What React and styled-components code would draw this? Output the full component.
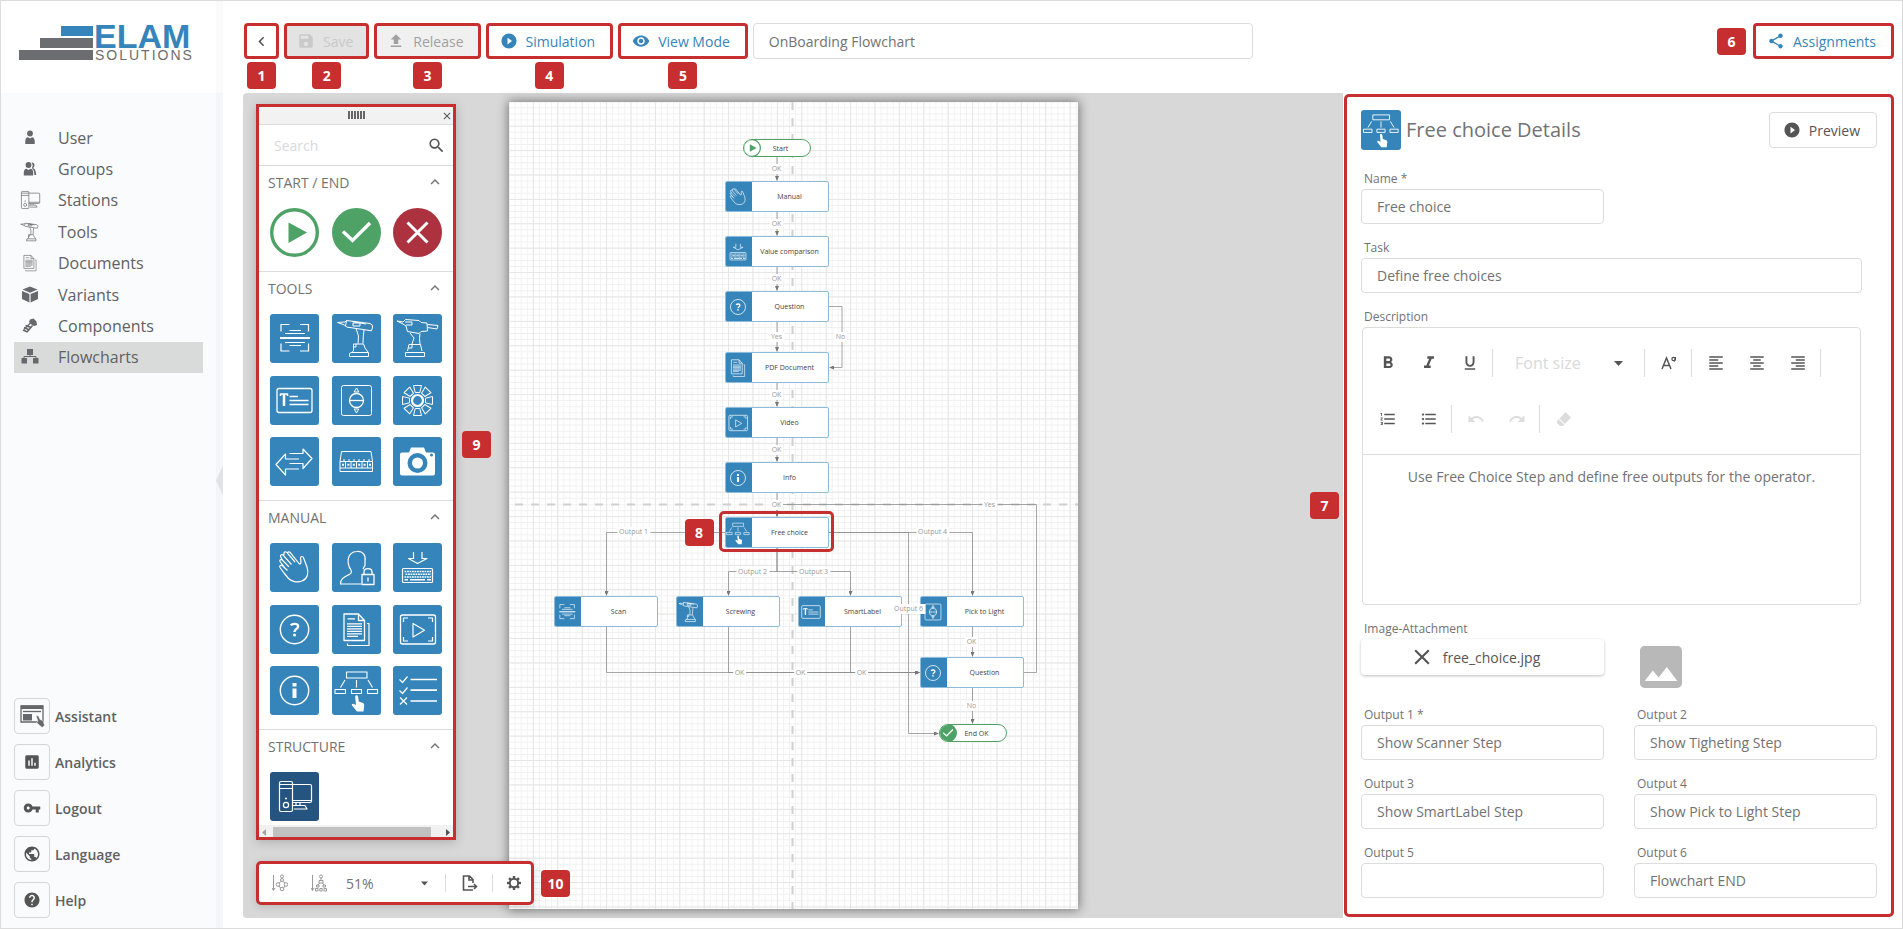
import React from "react";
import styled, { createGlobalStyle, css } from "styled-components";
import {
  MdSave, MdFileUpload, MdPlayCircleFilled, MdRemoveRedEye, MdShare, MdSearch,
  MdKeyboardArrowUp, MdChevronLeft, MdAssessment, MdVpnKey, MdPublic, MdHelp,
  MdFormatBold, MdFormatItalic, MdFormatUnderlined, MdFormatAlignLeft,
  MdFormatAlignCenter, MdFormatAlignRight, MdFormatListNumbered,
  MdFormatListBulleted, MdUndo, MdRedo, MdClose, MdImage,
} from "react-icons/md";

const color = {
  red: "#c62e30",
  blue: "#3685ba",
  navy: "#265481",
  green: "#4ea266",
  text: "#606163",
  soft: "#727272",
  line: "#dcdcdc",
};

const Global = createGlobalStyle`
  *, *::before, *::after { box-sizing: border-box; }
  body { margin: 0; background: #fff; }
  body, button, input, select, textarea { font-family: "Open Sans", "Noto Sans", sans-serif; }
  button, input, select, textarea { margin: 0; }
`;

/* ---------- page frame ---------- */

const Page = styled.div`
  display: flex;
  min-height: 100vh;
  border: 1px solid ${color.line};
  color: ${color.text};
  font-size: 14px;
`;

const Sidebar = styled.aside`
  display: flex;
  flex: 0 0 215px;
  flex-direction: column;
  background: #fafbfd;
`;

const LogoArea = styled.div`
  height: 92px;
  padding: 9px 0 0 18px;
  background: #fff;
`;

const Nav = styled.nav`
  display: grid;
  grid-auto-rows: 1fr;
  height: 251px;
  margin: 29px 13px 0;
`;

const NavLink = styled.a`
  display: flex;
  align-items: center;
  gap: 14px;
  padding-left: 2px;
  color: ${color.text};
  font-size: 16px;
  text-decoration: none;
  background: ${(p) => (p.$active ? "#d9dbdb" : "transparent")};

  svg { flex: none; color: #66686c; }
`;

const NavIcon = styled.span`
  display: flex;
  flex: 0 0 28px;
  align-items: center;
  justify-content: center;
`;

const UtilityList = styled.div`
  display: flex;
  flex-direction: column;
  gap: 10px;
  margin-top: auto;
  padding: 0 13px 10px;
`;

const UtilityButton = styled.button`
  display: flex;
  align-items: center;
  gap: 5px;
  padding: 0;
  border: 0;
  background: none;
  color: ${color.text};
  font-size: 14px;
  font-weight: 600;
`;

const UtilityIcon = styled.span`
  display: flex;
  align-items: center;
  justify-content: center;
  width: 36px;
  height: 36px;
  border: 1px solid #d4d6d9;
  border-radius: 4px;
  color: #555;
`;

const Rail = styled.div`
  display: flex;
  flex: 0 0 7px;
  align-items: center;
  background: linear-gradient(#fafafa 92px, #f4f5f8 92px);
`;

const RailHandle = styled.button`
  width: 7px;
  height: 30px;
  margin-top: 32px;
  padding: 0;
  border: 0;
  background: #e1e2e4;
  clip-path: polygon(100% 0, 100% 100%, 0 50%);
`;

const Main = styled.main`
  display: flex;
  flex: 1;
  flex-direction: column;
  min-width: 0;
  padding: 22px 8px 10px 20px;
`;

const TopBar = styled.header`
  display: flex;
  gap: 5px;
  min-height: 66px;
  margin: 0 0 4px 1px;
`;

const Callout = styled.div`
  display: flex;
  flex-direction: ${(p) => (p.$row ? "row" : "column")};
  align-items: center;
  align-self: flex-start;
  gap: ${(p) => (p.$row ? 7 : 3)}px;
  height: ${(p) => (p.$row ? "36px" : "auto")};
  margin-left: ${(p) => (p.$row ? "auto" : 0)};
`;

const Badge = styled.span`
  display: flex;
  align-items: center;
  justify-content: center;
  width: 29px;
  height: 27px;
  border-radius: 4px;
  background: ${color.red};
  color: #fff;
  font-size: 14px;
  font-weight: 700;
`;

const ActionButton = styled.button`
  display: flex;
  align-items: center;
  justify-content: center;
  gap: 8px;
  height: 36px;
  padding: ${(p) => (p.$compact ? "0 5px" : p.$plain ? "0 16px 0 13px" : "0 15px 0 11px")};
  border: ${(p) => (p.$plain ? `1px solid ${color.line}` : `3px solid ${color.red}`)};
  border-radius: 4px;
  background: #fff;
  color: ${(p) => (p.$plain || p.$compact ? "#555" : color.blue)};
  font-size: 14px;
  white-space: nowrap;

  ${(p) => p.$tone === "off" && css`padding: 0 13px 0 10px; background: #e3e3e3; color: #c9c9c9;`}
  ${(p) => p.$tone === "dim" && css`padding: 0 14px 0 10px; background: #f0f0f0; color: #a1a1a1;`}
`;

const TextInput = styled.input`
  width: 100%;
  height: 35px;
  padding: 0 15px;
  border: 1px solid ${color.line};
  border-radius: 4px;
  background: #fff;
  color: ${color.soft};
  font-size: 14px;
  outline: none;
`;

const TitleInput = styled(TextInput)`
  flex: 0 1 500px;
  height: 36px;
  min-width: 0;
`;

const Workspace = styled.div`
  display: flex;
  flex: 1;
  min-height: 0;
`;

/* ---------- canvas ---------- */

const Canvas = styled.section`
  position: relative;
  display: flex;
  flex: 1;
  justify-content: center;
  align-items: flex-start;
  min-width: 0;
  padding: 9px 0;
  border-radius: 4px 0 0 4px;
  background: #d8d8d8;
`;

const Paper = styled.div`
  position: relative;
  flex: none;
  width: 569px;
  height: 807px;
  background: #fff;
  box-shadow: 0 0 10px 1px rgba(0, 0, 0, 0.45);
`;

const Drawing = styled.svg`
  position: absolute;
  inset: 0;
  width: 100%;
  height: 100%;
`;

const StepNode = styled.div`
  position: absolute;
  left: ${(p) => p.$x - 509}px;
  top: ${(p) => p.$y - 102}px;
  display: flex;
  width: 104px;
  height: 31px;
  border: 1px solid #8dbbdb;
  border-radius: 2px;
  background: #fff;
  color: #444;
  font-size: 7px;
  overflow: hidden;
`;

const StepIcon = styled.span`
  display: flex;
  flex: 0 0 27px;
  align-items: center;
  justify-content: center;
  margin: -1px 0 -1px -1px;
  background: ${color.blue};
  color: #fff;
`;

const StepLabel = styled.span`
  flex: 1;
  align-self: center;
  text-align: center;
  white-space: nowrap;
`;

const Terminal = styled(StepNode)`
  width: 68px;
  height: 18px;
  padding-right: 9px;
  border: 1px solid ${color.green};
  border-radius: 9px;
`;

const TerminalIcon = styled.svg`
  flex: none;
  width: 18px;
  height: 18px;
  margin: -1px 0 0 -1px;
`;

const EdgeLabel = styled.span`
  position: absolute;
  left: ${(p) => p.$x - 509}px;
  top: ${(p) => p.$y - 102}px;
  padding: 0 2px;
  background: #fff;
  color: #999;
  font-size: 7px;
  line-height: 10px;
  white-space: nowrap;
  transform: translate(-50%, -50%);
`;

const Ring = styled.div`
  position: absolute;
  left: 210px;
  top: 409px;
  width: 115px;
  height: 41px;
  border: 3px solid ${color.red};
  border-radius: 5px;
`;

const PinnedBadge = styled(Badge)`
  position: absolute;
  left: ${(p) => p.$x}px;
  right: ${(p) => p.$right}px;
  top: ${(p) => p.$y}px;
`;

/* ---------- palette ---------- */

const Palette = styled.div`
  position: absolute;
  left: 13px;
  top: 11px;
  width: 200px;
  border: 3px solid ${color.red};
  background: #fff;
  box-shadow: 0 2px 10px rgba(0, 0, 0, 0.2);
`;

const PaletteBar = styled.div`
  display: flex;
  align-items: center;
  justify-content: flex-end;
  height: 18px;
  padding-left: 12px;
  border-bottom: 1px solid ${color.line};
  background: #f2f2f2;
  color: #555;
`;

const Grip = styled.span`
  width: 17px;
  height: 8px;
  margin: 0 auto 2px;
  background: repeating-linear-gradient(90deg, #666 0 2px, transparent 2px 3px);
`;

const IconButton = styled.button`
  display: flex;
  align-items: center;
  justify-content: center;
  width: ${(p) => p.$w || 24}px;
  height: ${(p) => p.$h || 24}px;
  padding: 0;
  border: 0;
  background: none;
  color: ${(p) => (p.disabled ? "#dcdcdc" : "#555")};
  font-size: 15px;
`;

const SearchRow = styled.label`
  display: flex;
  align-items: center;
  height: 41px;
  padding: 0 7px 0 15px;
  border-bottom: 1px solid ${color.line};
  color: #555;
`;

const SearchInput = styled.input`
  flex: 1;
  min-width: 0;
  padding: 0;
  border: 0;
  font-size: 14px;
  outline: none;
  &::placeholder { color: #d9d9d9; }
`;

const Group = styled.section`
  padding: 0 11px 14px;
  border-bottom: 1px solid ${color.line};
  &:last-of-type { padding-bottom: 4px; border-bottom: 0; }
`;

const GroupHeader = styled.button`
  display: flex;
  align-items: center;
  justify-content: space-between;
  width: calc(100% + 2px);
  height: 42px;
  padding: 0 0 10px;
  border: 0;
  background: none;
  color: ${color.soft};
  font-size: 14px;
  text-indent: -2px;
`;

const TileGrid = styled.div`
  display: grid;
  grid-template-columns: repeat(3, 49px);
  grid-auto-rows: 49px;
  justify-content: space-between;
  align-content: space-between;
  height: ${(p) => (p.$rows === 3 ? 172 : 49)}px;
`;

const Tile = styled.button`
  display: flex;
  padding: 0;
  border: 0;
  border-radius: ${(p) => (p.$round ? "50%" : "3px")};
  background: ${(p) => p.$bg || color.blue};
  color: #fff;
`;

const ScrollTrack = styled.div`
  display: flex;
  align-items: flex-end;
  justify-content: space-between;
  height: 12px;
  padding: 0 3px;
  background: #f1f1f1;
`;

const ScrollThumb = styled.span`
  width: 158px;
  height: 10px;
  margin: 0 auto 0 7px;
  background: #c1c1c1;
`;

const ScrollArrow = styled.svg`
  width: 4px;
  height: 8px;
`;

/* ---------- zoom bar ---------- */

const ZoomBar = styled.div`
  position: absolute;
  left: 13px;
  top: 768px;
  display: flex;
  align-items: center;
  width: 278px;
  height: 44px;
  padding: 0 0 0 7px;
  border: 3px solid ${color.red};
  border-radius: 5px;
  background: #fff;
  box-shadow: 0 2px 8px rgba(0, 0, 0, 0.15);
`;

const SelectWrap = styled.span`
  display: flex;
  align-items: center;
  width: ${(p) => p.$w}px;
  padding: 0 ${(p) => p.$end}px 0 ${(p) => p.$start}px;
  color: #555;
`;

const PlainSelect = styled.select`
  flex: 1;
  min-width: 0;
  padding: 0;
  border: 0;
  background: none;
  color: ${(p) => (p.$faint ? "#d9d9d9" : color.soft)};
  font-size: ${(p) => (p.$faint ? 16 : 14)}px;
  appearance: none;
  outline: none;
`;

const Divider = styled.span`
  flex: none;
  width: 1px;
  height: ${(p) => p.$h}px;
  margin: 0 3px 0 2px;
  background: ${color.line};
`;

/* ---------- details ---------- */

const Details = styled.section`
  flex: 0 0 550px;
  margin: 1px 0 1px 1px;
  padding: 13px 14px 0;
  border: 3px solid ${color.red};
  border-radius: 5px;
  background: #fff;
`;

const DetailsHeader = styled.div`
  display: flex;
  align-items: center;
  gap: 5px;
  height: 40px;
  margin-bottom: 19px;
`;

const DetailsIcon = styled.span`
  display: flex;
  width: 40px;
  height: 40px;
  border-radius: 3px;
  background: ${color.blue};
  color: #fff;
`;

const Heading = styled.h1`
  flex: 1;
  margin: 0;
  padding-bottom: 2px;
  color: ${color.soft};
  font-size: 20px;
  font-weight: 400;
`;

const Field = styled.div`
  width: ${(p) => (p.$size === "half" ? "243px" : p.$size === "wide" ? "501px" : "auto")};
  margin-bottom: 14px;
`;

const Label = styled.label`
  display: block;
  padding-left: 3px;
  color: ${color.soft};
  font-size: 12px;
  line-height: 20px;
`;

const Editor = styled.div`
  width: 499px;
  margin-left: 1px;
  border: 1px solid ${color.line};
  border-radius: 4px;
`;

const EditorTools = styled.div`
  padding: 7px 4px;
  border-bottom: 1px solid ${color.line};
`;

const ToolRow = styled.div`
  display: flex;
  align-items: center;
  height: 56px;
`;

const EditorText = styled.textarea`
  display: block;
  width: 100%;
  height: 149px;
  padding: 12px 15px;
  border: 0;
  color: ${color.soft};
  font-size: 14px;
  line-height: 20px;
  text-align: center;
  resize: none;
  outline: none;
  background: none;
`;

const Attachment = styled.div`
  display: flex;
  gap: 29px;
  height: 66px;
`;

const FileButton = styled.button`
  display: flex;
  align-items: center;
  justify-content: center;
  gap: 8px;
  width: 243px;
  height: 36px;
  padding: 0 16px 0 0;
  border: 0;
  border-radius: 4px;
  background: #fff;
  box-shadow: 0 1px 3px rgba(0, 0, 0, 0.25);
  color: #555;
  font-size: 14px;
`;

const Outputs = styled.div`
  display: grid;
  grid-template-columns: 1fr 1fr;
  column-gap: 30px;
`;

/* ---------- drawings ---------- */

function Art({ size = 49, width = 1, children }) {
  return (
    <svg width={size} height={size} viewBox="0 0 49 49" fill="none" stroke="currentColor" strokeWidth={width} strokeLinejoin="round" aria-hidden="true">
      {children}
    </svg>
  );
}

const art = {
  scan: (
    <g strokeWidth="1.2">
      <path d="M11 17.500V10.500H19.500M30 10.500H38.500V17.500M11 29.500V37H19.500M30 37H38.500V29.500" />
      <path d="M19.500 16.500H31M15 19.500H35M10 23.500H40M10 24.500H40M15 28.500H35M19.500 31.500H31" />
    </g>
  ),
  screw: (
    <>
      <path d="M5.500 8.500 13 8 14.500 6.500 38 9.500Q41 10.500 40.600 13L39.500 16.800 14.500 13 12.500 11Z" />
      <path d="M14.500 6.500 13.500 12M20 7.500 34 10M21 9H28V12H21ZM24 14.500Q28 22 26 29.500M32 16Q31 23 31 29.500M21.500 30H31.500L33 34 36 38M21.500 30V37L19 39M24 30V33H21.500" />
      <path d="M19 38.500H36.500V42.500H17.500V39.500Z" />
    </>
  ),
  nutrunner: (
    <>
      <path d="M4 7 10 8 12.500 5.500 26 6.500 28 8.500 34 9 34.500 17 28 17.500 26 19.500 14.500 17.500 13 12 10 10Z" />
      <path d="M12 8H19V11H13M34.500 10.500 45 11.500 44 15 34.500 13.500M17 19 21 24 19 30M27 19.500Q26 24 27 30M16 30.500H27.500L29 37M16 30.500 14.500 37M19 30.500V34H15.500" />
      <path d="M12.500 38.500H31.500V42.500H12.500Z" />
    </>
  ),
  label: (
    <>
      <rect x="7" y="12.500" width="35" height="24" rx="2" strokeWidth="1.300" />
      <path d="M10.500 20V18H17.500V20" strokeWidth="1.600" />
      <path d="M14 18V30" strokeWidth="2.500" />
      <path d="M19.500 20.500H28M19.500 24.500H38.500M19.500 28.500H38.500" strokeWidth="1.300" />
    </>
  ),
  light: (
    <>
      <rect x="9.500" y="9.500" width="30" height="30" rx="2" />
      <circle cx="24.500" cy="24.500" r="7" strokeWidth="1.300" />
      <path d="M17.500 24.500H31.500" strokeWidth="1.300" />
      <path d="M24.500 12 26.800 16H22.200ZM24.500 37 26.800 33H22.200Z" />
    </>
  ),
  wheel: (
    <>
      <circle cx="24.500" cy="24.500" r="5.500" strokeWidth="2.200" />
      {[0, 45, 90, 135, 180, 225, 270, 315].map((a) => (
        <path key={a} d="M20.500 9.500H28.500L26.800 16.500H22.200Z" transform={`rotate(${a} 24.500 24.500)`} />
      ))}
    </>
  ),
  swap: (
    <path strokeWidth="1.200" d="M19.500 16.500H33V12L42 21.500 33 31.500V26.500H19.500M29 22H15.500V17L6 27.500 15.500 38V32H29" />
  ),
  rack: (
    <>
      <path d="M9.500 14.500H39L40.500 24.500V34.500H8V24.500ZM8 24.500H40.500M8 31H40.500" />
      <path d="M11 23H38" strokeDasharray="2 3" />
      <path d="M13.500 24.500V31M19 24.500V31M24.500 24.500V31M30 24.500V31M35.500 24.500V31" />
      <path d="M10 27.800H39" strokeWidth="2" strokeDasharray="2 3.400" />
    </>
  ),
  camera: (
    <>
      <path fill="currentColor" stroke="none" fillRule="evenodd" d="M9 15.500H16L18 10.500H31L33 15.500H40Q42 15.500 42 17.500V36.500Q42 38.500 40 38.500H9Q7 38.500 7 36.500V17.500Q7 15.500 9 15.500ZM24.500 16A10 10 0 1 0 24.500 36 10 10 0 0 0 24.500 16ZM24.500 20.500A5.500 5.500 0 1 1 24.500 31.500 5.500 5.500 0 0 1 24.500 20.500ZM38.500 16.500A1.500 1.500 0 1 0 38.500 19.500 1.500 1.500 0 0 0 38.500 16.500Z" />
    </>
  ),
  hand: (
    <path strokeWidth="1.200" d="M12.300 22.500 17.500 27.500M14 30 10 24.500C9 22.800 11 21.300 12.300 22.500M15 25 10 18.500C9.300 17 11 15.800 12.300 17L19 23.800M12.300 17 10.500 13.500C10.200 11.800 12 11 13.300 12.300L21.500 21.500M13.800 12.800 14 10C14.200 8.600 15.800 8.400 16.800 9.400L25 19M17.500 10C17.800 8.600 19.500 8.600 20.300 9.600L29 20.500C30 21.500 31 20.500 31 19L30.500 15C30.600 13 33 13 33.600 15L37 24C39 30 37.500 36 32 38 27 39.800 21.500 38.500 18.500 35.500L14 30" />
  ),
  userLock: (
    <>
      <path strokeWidth="1.200" d="M29 41H8.500C8.500 35 13 34 18 31 20 30 19.500 27.500 18.500 26 16.500 24 17 22 16.200 20 15.500 13 19 8.500 25 8.500 31 8 34 12 33 18L33 22.500C32 23.500 31.500 25 31 26" />
      <rect x="30" y="31.500" width="12" height="10" strokeWidth="1.300" />
      <path strokeWidth="1.300" d="M32 31.500V29C32 24.500 40 24.500 40 29V31.500M36 34.500V38.500" />
    </>
  ),
  keyboard: (
    <>
      <path strokeWidth="1.200" d="M20.500 9V15.500H15.500L24.500 20.500 34 15.500H29V9" />
      <rect x="9.500" y="25.500" width="30" height="14" rx="1" strokeWidth="1.200" />
      <path strokeWidth="1.500" strokeDasharray="1.800 .7" d="M11.500 28.500H38M12.500 31.300H38M11.500 34H38" />
      <path strokeWidth="1.500" d="M11.500 36.800H15M17 36.800H32M34 36.800H38" />
    </>
  ),
  question: (
    <>
      <circle cx="24.500" cy="24.500" r="14.200" strokeWidth="1.400" />
      <path strokeWidth="2.400" d="M20.800 20.300C22 18.800 27.800 17.600 28.200 21.300 28.200 24 24.500 23.800 24.500 27" />
      <circle cx="24.500" cy="30" r="1.500" fill="currentColor" stroke="none" />
    </>
  ),
  document: (
    <>
      <path strokeWidth="1.300" d="M12 9H26.500L32.500 15.500V35.500H12ZM26.500 9V15.500H32.500" />
      <path strokeWidth="1.200" d="M15.500 13.800H23M15 18.800H30M15 21.300H30M15 23.800H30M15 26.300H30M15 28.800H30M15 31.300H26M35 18.500H37V40.500H15.500V38.500" />
    </>
  ),
  video: (
    <>
      <rect x="7.500" y="10" width="35" height="29" rx="2" strokeWidth="1.300" />
      <path d="M10.500 17V13H15M35 13H39.500V17M10.500 32V36H15M35 36H39.500V32" strokeWidth="1.200" />
      <path d="M20 18.500 31.500 25.300 20 32Z" strokeWidth="1.200" />
    </>
  ),
  info: (
    <>
      <circle cx="24.500" cy="24.500" r="14.200" strokeWidth="1.400" />
      <path fill="currentColor" stroke="none" d="M22.500 17H26.500V20.500H22.500ZM22.500 22.500H26.500V32H22.500Z" />
    </>
  ),
  choice: (
    <>
      <path d="M14.500 6H35V12H14.500ZM3 23.500H13.500V27.500H3ZM19.500 23.500H29.500V27.500H19.500ZM35.500 23.500H45.500V27.500H35.500ZM13 14 8.500 21.500M24.500 14V21.500M36 14 40.500 21.500" strokeWidth="1.100" />
      <path fill="currentColor" stroke="none" d="M23.200 31C23 28.700 26 28.700 26.200 31L26.700 35.500 31 37C32.200 37.500 32.500 39 32 41L31.500 45.500H25L20 39.500C19.200 38 21 37 22.500 38.300L24 39Z" />
    </>
  ),
  checklist: (
    <>
      <path d="M17.500 13.500H44M17.500 24.200H44M17.500 35H44" strokeWidth="1.700" />
      <path strokeWidth="1.200" d="M6.500 13.500 9.500 16.500 14.500 10.500M6.500 24.500 9.500 27.500 14.500 21.500M7 31.500 14 38.500M14 31.500 7 38.500" />
    </>
  ),
  station: (
    <>
      <rect x="9.500" y="9.500" width="13" height="30" rx="1.500" strokeWidth="1.200" />
      <path strokeWidth="1.200" d="M9.500 12.500H22.500M9.500 16.500H22.500M22.500 12.500H40Q41.500 12.500 41.500 14V29Q41.500 30.500 40 30.500H22.500M22.500 28.500H41.500M26 30.500V33.500M30 30.500V33.500M23 33.500H35L37 37H24" />
      <circle cx="16" cy="33" r="2.600" strokeWidth="1.200" />
      <circle cx="16" cy="26.500" r="1" fill="currentColor" stroke="none" />
    </>
  ),
};

function Mini({ children }) {
  return <svg width="28" height="28" viewBox="0 0 28 28" fill="currentColor" aria-hidden="true">{children}</svg>;
}

const navArt = {
  user: <Mini><circle cx="14" cy="9.500" r="2.900" /><path d="M9.300 20V17Q9.500 13.500 12 13.200L14 14.500 16 13.200Q18.500 13.500 18.700 17V20Z" /></Mini>,
  groups: <Mini><circle cx="12.500" cy="10" r="2.900" /><path d="M7.800 20.500V17.500Q8 14 10.500 13.700L12.500 15 14.500 13.700Q17 14 17.200 17.500V20.500Z" /><path d="M15.500 7.500Q18.500 7 18.500 10 18.500 12.500 17 13 19.800 14 20.300 20H18.500Q18.500 15.500 16 13Q17.500 10 15.500 7.500Z" /></Mini>,
  cube: <Mini><path d="M14 5.500 21.500 8.500 14 11.700 6.500 8.500ZM6 10 13.400 13V21.500L6 18ZM22 10 14.600 13V21.500L22 18Z" /></Mini>,
  screw: <Mini><path d="M14 7.500 17.500 6.500 20.500 9.500 21 13 18.500 14 16.500 13.500 13 10Z" /><path d="M14.500 11 8 17.500M16.500 13.500 11 20" stroke="currentColor" strokeWidth="1.500" /><path d="M9.500 13.500 15 15.500M8 15.500 13.500 18M7 18 11.500 20" stroke="currentColor" strokeWidth="1.600" /></Mini>,
  blocks: <Mini><path d="M11 6H17V12H11ZM5.500 15H11V20.500H5.500ZM17 15H22.500V20.500H17Z" /><path d="M14 12V14M8 15.500V13.500H20V15.500" fill="none" stroke="currentColor" strokeWidth="1" /></Mini>,
};

function Logo() {
  return (
    <svg width="190" height="60" viewBox="19 10 190 60" role="img" aria-label="ELAM Solutions">
      <rect x="61" y="26" width="32" height="10" fill={color.blue} />
      <rect x="40" y="38" width="53" height="10" fill="#6c6d70" />
      <rect x="19" y="50" width="74" height="10" fill="#6c6d70" />
      <text x="94" y="48" fill={color.blue} fontFamily="Liberation Sans, sans-serif" fontWeight="700" fontSize="34">ELAM</text>
      <text x="95" y="60" fill="#6c6d70" fontFamily="Liberation Sans, sans-serif" fontSize="14" letterSpacing="2">SOLUTIONS</text>
    </svg>
  );
}

function AssistantIcon() {
  return (
    <svg width="26" height="26" viewBox="0 0 26 26" aria-hidden="true">
      <path d="M2 3H24V19H2Z" fill="none" stroke="#666" strokeWidth="1.300" />
      <path d="M2 2.500H24V6H2ZM4 11H13V17.500H4Z" fill="#66686c" />
      <path d="M4 8.500H22" stroke="#666" strokeWidth="1.300" />
      <path d="M17 12.500 19.500 13 21 16.500 24 17.500 25.500 22.500 23 24.500 17.500 19.500 19 18.500Z" fill="#66686c" stroke="#fff" strokeWidth=".5" />
    </svg>
  );
}

const Caret = ({ width = 9 }) => (
  <svg width={width} height="5" viewBox="0 0 9 5" fill="currentColor" aria-hidden="true"><path d="M0 0H9L4.500 5Z" /></svg>
);

function LayoutIcon({ tree }) {
  return (
    <svg width="16" height="18" viewBox="0 0 16 18" fill="none" stroke="#999" strokeWidth="1" aria-hidden="true">
      <path d="M1.500 1V16M0 14 1.500 16.500 3 14" />
      <circle cx="10" cy="2.500" r="1.500" />
      {tree ? (
        <path d="M10 4V6M8 6.500H12V9H8ZM8.500 9 7 11M11.500 9 13 11M5.500 11H8V13H5.500ZM12 11H14.500V13H12ZM4.500 14.500H7V17H4.500ZM8.800 14.500H11.200V17H8.800ZM13 14.500H15.500V17H13Z" />
      ) : (
        <>
          <circle cx="10" cy="6" r="1.500" /><circle cx="6" cy="10.500" r="1.800" /><circle cx="14" cy="10.500" r="1.800" />
          <circle cx="10" cy="15" r="1.800" /><path d="M9 7.500 7 9M11 7.500 13 9M7 12 8.500 14M13 12 11.500 14" />
        </>
      )}
    </svg>
  );
}

const ExportIcon = () => (
  <svg width="16" height="18" viewBox="0 0 16 18" fill="none" stroke="#555" strokeWidth="1.600" aria-hidden="true">
    <path d="M11 16H1.500V2H7.500L11 5.500V9M7 2V6H11M6 12.500H14M12 10 14.500 12.500 12 15" />
  </svg>
);

const GearIcon = () => (
  <svg width="16" height="16" viewBox="0 0 16 16" fill="none" stroke="#555" aria-hidden="true">
    <circle cx="8" cy="8" r="4.200" strokeWidth="2" />
    {[0, 45, 90, 135, 180, 225, 270, 315].map((a) => (
      <path key={a} d="M8 1V4" strokeWidth="2.400" transform={`rotate(${a} 8 8)`} />
    ))}
  </svg>
);

const EraserIcon = () => (
  <svg width="16" height="16" viewBox="0 0 16 16" fill="currentColor" aria-hidden="true">
    <path d="M9.500 1 15 6.500 9 13 3.500 7.500ZM2.800 8.200 8.200 13.600 7 15H4L1 12V10Z" />
  </svg>
);

const FontCaseIcon = () => (
  <svg width="16" height="16" viewBox="0 0 16 16" fill="none" stroke="currentColor" strokeWidth="1.500" aria-hidden="true">
    <path d="M1 14 5.500 3 10 14M2.800 10.500H8.200" />
    <circle cx="12.500" cy="4" r="1.600" strokeWidth="1.200" /><path d="M14.500 2Q15 5 13 6.500" strokeWidth="1.200" />
  </svg>
);

const PlayGlyph = () => (
  <>
    <circle cx="24.500" cy="24.500" r="22.800" fill="#fff" stroke={color.green} strokeWidth="3.400" />
    <path d="M18.500 14.500 37 24.500 18.500 35Z" fill={color.green} stroke="none" />
  </>
);
const CheckGlyph = () => (
  <>
    <circle cx="24.500" cy="24.500" r="24.500" fill={color.green} stroke="none" />
    <path d="M11 23.500 20.500 32.500 38 15" fill="none" stroke="#fff" strokeWidth="3.400" strokeLinejoin="miter" />
  </>
);
const CrossGlyph = () => (
  <>
    <circle cx="24.500" cy="24.500" r="24.500" fill="#ab323e" stroke="none" />
    <path d="M14.500 14.500 34.500 34.500M34.500 14.500 14.500 34.500" fill="none" stroke="#fff" strokeWidth="3" />
  </>
);

/* ---------- data ---------- */

const navItems = [
  ["User", navArt.user],
  ["Groups", navArt.groups],
  ["Stations", <Art size={28} width={1.6}>{art.station}</Art>],
  ["Tools", <Art size={24} width={1.4}>{art.screw}</Art>],
  ["Documents", <Art size={24} width={1.4}>{art.document}</Art>],
  ["Variants", navArt.cube],
  ["Components", navArt.screw],
  ["Flowcharts", navArt.blocks],
];

const utilities = [
  ["Assistant", <AssistantIcon />],
  ["Analytics", <MdAssessment size={18} />],
  ["Logout", <MdVpnKey size={18} />],
  ["Language", <MdPublic size={18} />],
  ["Help", <MdHelp size={18} />],
];

const toolTiles = ["scan", "screw", "nutrunner", "label", "light", "wheel", "swap", "rack", "camera"];
const manualTiles = ["hand", "userLock", "keyboard", "question", "document", "video", "info", "choice", "checklist"];

const steps = [
  ["Manual", "hand", 725, 181],
  ["Value comparison", "keyboard", 725, 236],
  ["Question", "question", 725, 291],
  ["PDF Document", "document", 725, 352],
  ["Video", "video", 725, 407],
  ["Info", "info", 725, 462],
  ["Free choice", "choice", 725, 517],
  ["Scan", "scan", 554, 596],
  ["Screwing", "screw", 676, 596],
  ["SmartLabel", "label", 798, 596],
  ["Pick to Light", "light", 920, 596],
  ["Question", "question", 920, 657],
];

const edges = [
  "M777 157V180", "M777 212V235", "M777 267V290", "M777 322V351", "M777 383V406",
  "M777 438V461", "M777 493V516", "M829 306.500H842V367.500H830",
  "M725 532.500H606.500V595", "M777 548V571.500H728.500V595", "M777 548V571.500H850.500V595",
  "M829 532.500H972.500V595", "M829 532.500H908.500V733.500H938",
  "M606.500 627V672.500H919", "M728.500 627V672.500H919", "M850.500 627V672.500H919",
  "M972.500 627V656", "M972.500 688V723", "M1024 672.500H1036.500V504.500H777V516",
];

const edgeLabels = [
  ["OK", 777, 169], ["OK", 777, 224], ["OK", 777, 279], ["Yes", 777, 337], ["OK", 777, 395],
  ["OK", 777, 450], ["OK", 777, 505], ["No", 841, 337], ["Output 1", 634, 532],
  ["Output 2", 753, 572], ["Output 3", 814, 572], ["Output 4", 933, 532],
  ["OK", 740, 673], ["OK", 801, 673], ["OK", 862, 673],
  ["OK", 972, 642], ["No", 972, 706], ["Yes", 990, 505],
];

const outputs = [
  ["Output 1 *", "Show Scanner Step"], ["Output 2", "Show Tigheting Step"],
  ["Output 3", "Show SmartLabel Step"], ["Output 4", "Show Pick to Light Step"],
  ["Output 5", ""], ["Output 6", "Flowchart END"],
];

/* ---------- parts ---------- */

function PaletteGroup({ title, rows, children }) {
  return (
    <Group>
      <GroupHeader type="button"><span>{title}</span><MdKeyboardArrowUp size={18} /></GroupHeader>
      <TileGrid $rows={rows}>{children}</TileGrid>
    </Group>
  );
}

const tiles = (names) =>
  names.map((n) => <Tile key={n} type="button" aria-label={n}><Art>{art[n]}</Art></Tile>);

function Flowchart() {
  return (
    <Paper>
      <Drawing viewBox="509 102 569 807" aria-hidden="true">
        <defs>
          <pattern id="minor" width="12" height="12" patternUnits="userSpaceOnUse" patternTransform="translate(508.500 101.300) scale(.5083)">
            <path d="M0 0H12M0 0V12" fill="none" stroke="#efefef" strokeWidth="3" />
          </pattern>
          <pattern id="major" width="48" height="48" patternUnits="userSpaceOnUse" patternTransform="translate(508.500 101.300) scale(.5083)">
            <path d="M0 0H48M0 0V48" fill="none" stroke="#e6e6e6" strokeWidth="4" />
          </pattern>
          <marker id="tip" viewBox="0 0 5 4" refX="4" refY="2" markerWidth="5" markerHeight="4" orient="auto" markerUnits="userSpaceOnUse">
            <path d="M0 0 5 2 0 4Z" fill="#777" />
          </marker>
        </defs>
        <rect x="509" y="102" width="569" height="807" fill="url(#minor)" />
        <rect x="509" y="102" width="569" height="807" fill="url(#major)" />
        <path d="M792.500 102V909M515 504.500H1078" stroke="#d0d0d0" strokeWidth="2" strokeDasharray="8 8" />
        <g fill="none" stroke="#8a8a8a" strokeOpacity=".75" strokeWidth="1">
          {edges.map((d) => <path key={d} d={d} markerEnd="url(#tip)" />)}
        </g>
      </Drawing>
      {edgeLabels.map(([t, x, y]) => <EdgeLabel key={`${x}-${y}`} $x={x} $y={y}>{t}</EdgeLabel>)}
      <Terminal $x={743} $y={139}>
        <TerminalIcon viewBox="0 0 49 49"><PlayGlyph /></TerminalIcon>
        <StepLabel>Start</StepLabel>
      </Terminal>
      {steps.map(([t, icon, x, y]) => (
        <StepNode key={`${x}-${y}`} $x={x} $y={y}>
          <StepIcon><Art size={26} width={1.2}>{art[icon]}</Art></StepIcon>
          <StepLabel>{t}</StepLabel>
        </StepNode>
      ))}
      <Terminal $x={939} $y={724}>
        <TerminalIcon viewBox="0 0 49 49"><CheckGlyph /></TerminalIcon>
        <StepLabel>End OK</StepLabel>
      </Terminal>
      <EdgeLabel $x={909} $y={609}>Output 6</EdgeLabel>
      <Ring />
      <PinnedBadge $x={176} $y={417}>8</PinnedBadge>
    </Paper>
  );
}

function DetailsPanel() {
  return (
    <Details>
      <DetailsHeader>
        <DetailsIcon><Art size={40}>{art.choice}</Art></DetailsIcon>
        <Heading>Free choice Details</Heading>
        <ActionButton type="button" $plain><MdPlayCircleFilled size={18} />Preview</ActionButton>
      </DetailsHeader>
      <Field $size="half">
        <Label htmlFor="name">Name *</Label>
        <TextInput id="name" defaultValue="Free choice" />
      </Field>
      <Field $size="wide">
        <Label htmlFor="task">Task</Label>
        <TextInput id="task" defaultValue="Define free choices" />
      </Field>
      <Field>
        <Label htmlFor="description">Description</Label>
        <Editor>
          <EditorTools>
            <ToolRow>
              <IconButton $w={41} aria-label="Bold"><MdFormatBold size={20} /></IconButton>
              <IconButton $w={41} aria-label="Italic"><MdFormatItalic size={20} /></IconButton>
              <IconButton $w={41} aria-label="Underline"><MdFormatUnderlined size={18} /></IconButton>
              <Divider $h={28} />
              <SelectWrap $w={146} $start={19} $end={19}>
                <PlainSelect $faint aria-label="Font size" defaultValue="Font size"><option>Font size</option></PlainSelect>
                <Caret />
              </SelectWrap>
              <Divider $h={28} />
              <IconButton $w={41} aria-label="Superscript"><FontCaseIcon /></IconButton>
              <Divider $h={28} />
              <IconButton $w={41} aria-label="Align left"><MdFormatAlignLeft size={18} /></IconButton>
              <IconButton $w={41} aria-label="Align center"><MdFormatAlignCenter size={18} /></IconButton>
              <IconButton $w={41} aria-label="Align right"><MdFormatAlignRight size={18} /></IconButton>
              <Divider $h={28} />
            </ToolRow>
            <ToolRow>
              <IconButton $w={41} aria-label="Ordered list"><MdFormatListNumbered size={18} /></IconButton>
              <IconButton $w={41} aria-label="Bullet list"><MdFormatListBulleted size={18} /></IconButton>
              <Divider $h={28} />
              <IconButton $w={41} disabled aria-label="Undo"><MdUndo size={18} /></IconButton>
              <IconButton $w={41} disabled aria-label="Redo"><MdRedo size={18} /></IconButton>
              <Divider $h={28} />
              <IconButton $w={41} disabled aria-label="Clear formatting"><EraserIcon /></IconButton>
            </ToolRow>
          </EditorTools>
          <EditorText id="description" defaultValue="Use Free Choice Step and define free outputs for the operator." />
        </Editor>
      </Field>
      <Label as="div">Image-Attachment</Label>
      <Attachment>
        <FileButton type="button"><MdClose size={26} />free_choice.jpg</FileButton>
        <MdImage size={56} color="#b8b8b8" />
      </Attachment>
      <Outputs>
        {outputs.map(([label, value]) => (
          <Field key={label}>
            <Label htmlFor={label}>{label}</Label>
            <TextInput id={label} defaultValue={value} />
          </Field>
        ))}
      </Outputs>
    </Details>
  );
}

export default function App() {
  return (
    <>
      <Global />
      <Page>
        <Sidebar>
          <LogoArea><Logo /></LogoArea>
          <Nav>
            {navItems.map(([label, icon]) => (
              <NavLink key={label} href="#" $active={label === "Flowcharts"}>
                <NavIcon>{icon}</NavIcon>{label}
              </NavLink>
            ))}
          </Nav>
          <UtilityList>
            {utilities.map(([label, icon]) => (
              <UtilityButton key={label} type="button"><UtilityIcon>{icon}</UtilityIcon>{label}</UtilityButton>
            ))}
          </UtilityList>
        </Sidebar>
        <Rail><RailHandle type="button" aria-label="Collapse menu" /></Rail>
        <Main>
          <TopBar>
            <Callout><ActionButton $compact type="button" aria-label="Back"><MdChevronLeft size={19} /></ActionButton><Badge>1</Badge></Callout>
            <Callout><ActionButton $tone="off" type="button" disabled><MdSave size={18} />Save</ActionButton><Badge>2</Badge></Callout>
            <Callout><ActionButton $tone="dim" type="button"><MdFileUpload size={18} />Release</ActionButton><Badge>3</Badge></Callout>
            <Callout><ActionButton type="button"><MdPlayCircleFilled size={18} />Simulation</ActionButton><Badge>4</Badge></Callout>
            <Callout><ActionButton type="button"><MdRemoveRedEye size={18} />View Mode</ActionButton><Badge>5</Badge></Callout>
            <TitleInput aria-label="Flowchart name" defaultValue="OnBoarding Flowchart" />
            <Callout $row><Badge>6</Badge><ActionButton type="button"><MdShare size={18} />Assignments</ActionButton></Callout>
          </TopBar>
          <Workspace>
            <Canvas>
              <Flowchart />
              <Palette>
                <PaletteBar><Grip /><IconButton $w={12} $h={16} aria-label="Close"><MdClose size={12} /></IconButton></PaletteBar>
                <SearchRow><SearchInput placeholder="Search" aria-label="Search" /><MdSearch size={19} /></SearchRow>
                <PaletteGroup title="START / END" rows={1}>
                  <Tile $round $bg="#fff" type="button" aria-label="Start"><Art><PlayGlyph /></Art></Tile>
                  <Tile $round $bg="#fff" type="button" aria-label="End OK"><Art><CheckGlyph /></Art></Tile>
                  <Tile $round $bg="#fff" type="button" aria-label="End not OK"><Art><CrossGlyph /></Art></Tile>
                </PaletteGroup>
                <PaletteGroup title="TOOLS" rows={3}>{tiles(toolTiles)}</PaletteGroup>
                <PaletteGroup title="MANUAL" rows={3}>{tiles(manualTiles)}</PaletteGroup>
                <PaletteGroup title="STRUCTURE" rows={1}>
                  <Tile $bg={color.navy} type="button" aria-label="Station"><Art>{art.station}</Art></Tile>
                </PaletteGroup>
                <ScrollTrack>
                  <ScrollArrow viewBox="0 0 4 8"><path d="M4 0V7L0 3.500Z" fill="#a3a3a3" /></ScrollArrow>
                  <ScrollThumb />
                  <ScrollArrow viewBox="0 0 4 8"><path d="M0 0V7L4 3.500Z" fill="#505050" /></ScrollArrow>
                </ScrollTrack>
              </Palette>
              <PinnedBadge $x={219} $y={338}>9</PinnedBadge>
              <PinnedBadge $right={4} $y={399}>7</PinnedBadge>
              <ZoomBar>
                <IconButton $w={28} aria-label="Radial layout"><LayoutIcon /></IconButton>
                <IconButton $w={50} aria-label="Tree layout"><LayoutIcon tree /></IconButton>
                <SelectWrap $w={99} $start={2} $end={15}>
                  <PlainSelect aria-label="Zoom" defaultValue="51%"><option>51%</option></PlainSelect>
                  <Caret width={7} />
                </SelectWrap>
                <Divider $h={18} />
                <IconButton $w={41} aria-label="Export"><ExportIcon /></IconButton>
                <Divider $h={18} />
                <IconButton $w={35} aria-label="Settings"><GearIcon /></IconButton>
              </ZoomBar>
              <PinnedBadge $x={298} $y={777}>10</PinnedBadge>
            </Canvas>
            <DetailsPanel />
          </Workspace>
        </Main>
      </Page>
    </>
  );
}
